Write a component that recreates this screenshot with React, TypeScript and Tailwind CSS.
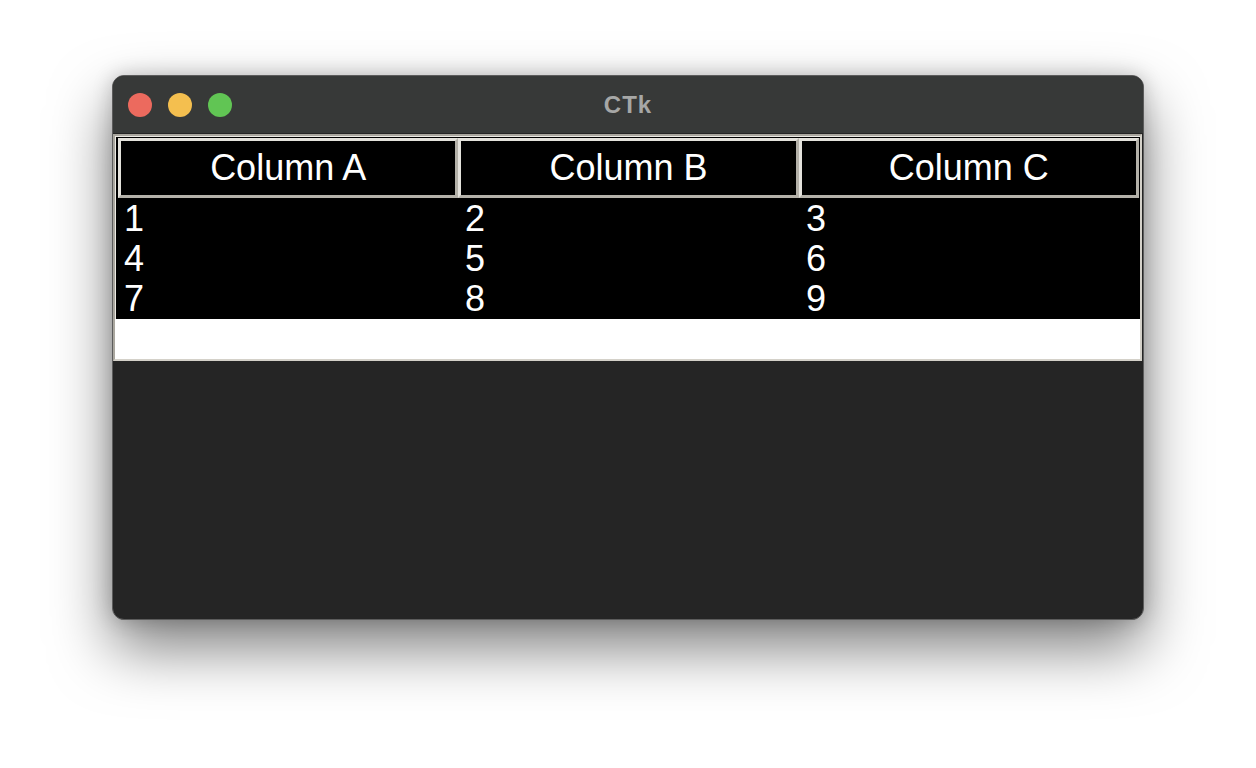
const columns = ['Column A', 'Column B', 'Column C'];

const rows = [
  ['1', '2', '3'],
  ['4', '5', '6'],
  ['7', '8', '9'],
];

function TrafficLights() {
  return (
    <div className="flex items-center gap-[16px] pl-[15px]">
      <div className="w-[24px] h-[24px] rounded-full bg-[#ec6a5e]" />
      <div className="w-[24px] h-[24px] rounded-full bg-[#f4bf4f]" />
      <div className="w-[24px] h-[24px] rounded-full bg-[#61c554]" />
    </div>
  );
}

function TreeView() {
  return (
    <div className="mt-[1px] mr-[1px] h-[227px] border-2 border-t-[#a9a69e] border-l-[#a9a69e] border-b-[#d4d1c9] border-r-[#d4d1c9] bg-white">
      <div className="border-l border-t border-[#eceae4] bg-white">
        <div className="flex bg-black pl-[2px] pr-[1px] py-[1px]">
          {columns.map((col) => (
            <div
              key={col}
              className="flex-1 h-[60px] flex items-center justify-center border-[3px] border-t-[#e4e2dc] border-l-[#e4e2dc] border-b-[#b4b1a9] border-r-[#b4b1a9] text-white text-[36px] leading-none"
            >
              {col}
            </div>
          ))}
        </div>
        {rows.map((row, i) => (
          <div key={i} className="flex h-[40px] bg-black pl-[2px] pr-[1px]">
            {row.map((cell, j) => (
              <div
                key={j}
                className={j === 0 ? 'flex-1 pl-[6px] text-white text-[36px] leading-[40px]' : 'flex-1 pl-[8px] text-white text-[36px] leading-[40px]'}
              >
                {cell}
              </div>
            ))}
          </div>
        ))}
      </div>
    </div>
  );
}

export default function App() {
  return (
    <div
      className="w-[1256px] h-[768px] bg-white pt-[75px] pl-[112px]"
      style={{ fontFamily: '"Liberation Sans", Arial, sans-serif' }}
    >
      <div className="w-[1032px] h-[545px] rounded-[12px] overflow-hidden border border-[#5c5c5c] bg-[#252525] shadow-[0_28px_60px_rgba(0,0,0,0.5),0_0_20px_rgba(0,0,0,0.2)]">
        <div className="relative h-[57px] flex items-center bg-[#373938]">
          <TrafficLights />
          <div className="absolute inset-0 flex items-center justify-center text-[24px] font-bold tracking-[1px] text-[#a6a7a6]">
            CTk
          </div>
        </div>
        <TreeView />
      </div>
    </div>
  );
}
